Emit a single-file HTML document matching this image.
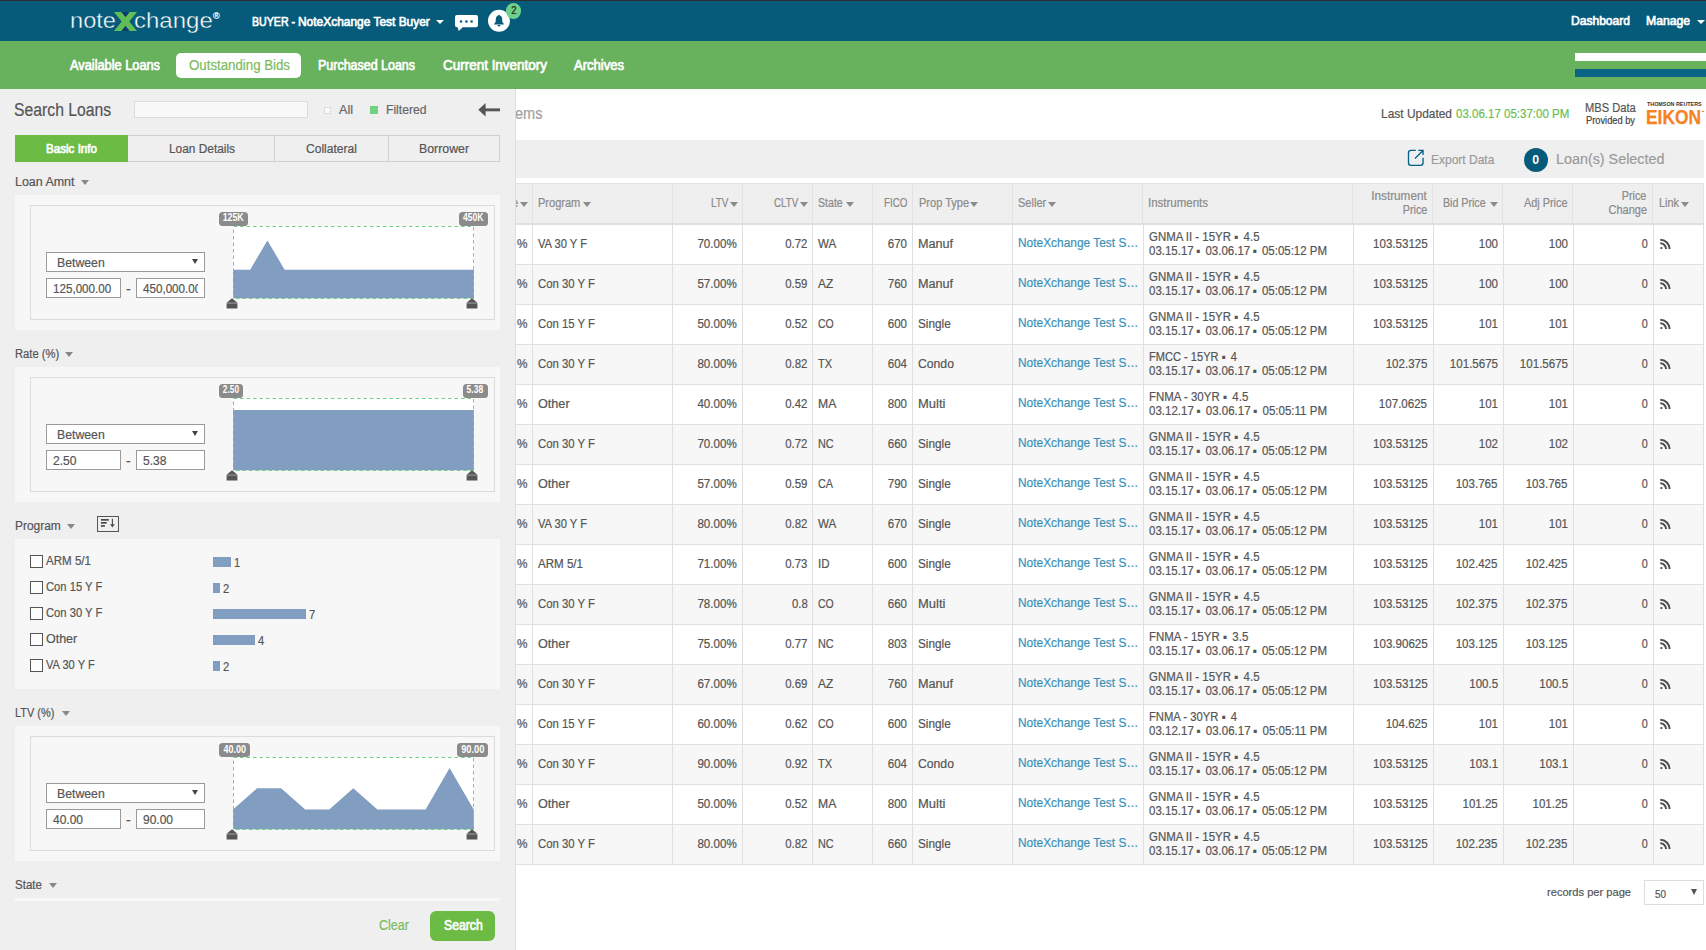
<!DOCTYPE html>
<html><head><meta charset="utf-8"><title>noteXchange</title><style>
html,body{margin:0;padding:0;}
body{width:1706px;height:950px;overflow:hidden;background:#fff;position:relative;font-family:"Liberation Sans",sans-serif;}
.t{position:absolute;white-space:pre;line-height:1;display:block;-webkit-text-stroke:0.2px currentColor;}
.b{position:absolute;box-sizing:border-box;display:block;}
</style></head><body>
<div class="b " style="left:0px;top:0px;width:1706px;height:41px;background:#065a7a;"></div>
<div class="b " style="left:0px;top:0px;width:1706px;height:1px;background:#2a2e33;"></div>
<div class="b " style="left:0px;top:41px;width:1706px;height:48px;background:#68b15d;"></div>
<span class="t" style="top:10.08px;font-size:22px;color:#fff;left:69.80px;transform-origin:0 0;transform:scaleX(1.0744);-webkit-text-stroke:0.4px #065a7a;">note</span>
<span class="t" style="top:10.08px;font-size:22px;color:#fff;left:134.20px;transform-origin:0 0;transform:scaleX(1.0919);-webkit-text-stroke:0.4px #065a7a;">change</span>
<svg class="b" style="left:114.3px;top:12px" width="23" height="19" viewBox="0 0 23 19"><path d="M0 0 H7.5 L23 19 H15.5 Z" fill="#63bd57"/><path d="M15.5 0 H23 L7.5 19 H0 Z" fill="#63bd57"/><path d="M7.5 0 H15.5 L11.5 4.9 Z" fill="#0b3c6e"/><path d="M7.5 19 H15.5 L11.5 14.1 Z" fill="#0b3c6e"/></svg>
<span class="t" style="top:10.56px;font-size:9.5px;color:#fff;left:213.20px;transform-origin:0 0;transform:scaleX(0.9500);">®</span>
<span class="t" style="top:14.87px;font-size:13.5px;color:#fff;-webkit-text-stroke:0.7px currentColor;left:252.00px;transform-origin:0 0;transform:scaleX(0.7871);">BUYER -</span>
<span class="t" style="top:14.87px;font-size:13.5px;color:#fff;-webkit-text-stroke:0.7px currentColor;left:297.70px;transform-origin:0 0;transform:scaleX(0.8841);">NoteXchange Test Buyer</span>
<div class="b" style="left:436px;top:20px;width:0;height:0;border-left:4.25px solid transparent;border-right:4.25px solid transparent;border-top:4.2px solid #fff;"></div>
<svg class="b" style="left:454px;top:14px" width="26" height="18" viewBox="0 0 26 18"><path d="M3 1 H22 Q24 1 24 3 V11.3 Q24 13.3 22 13.3 H8.8 L4.7 16.9 L3.6 13.3 H3 Q1 13.3 1 11.3 V3 Q1 1 3 1 Z" fill="#fff"/><circle cx="7" cy="7.4" r="1.25" fill="#0a5a80"/><circle cx="12.4" cy="7.4" r="1.25" fill="#0a5a80"/><circle cx="17.6" cy="7.4" r="1.25" fill="#0a5a80"/></svg>
<svg class="b" style="left:487px;top:9px" width="24" height="24" viewBox="0 0 24 24"><circle cx="12" cy="11.8" r="11" fill="#fff"/><path d="M12 5.8 C12.6 5.8 12.9 6.2 13 6.7 C14.6 7.2 15.2 8.6 15.2 10.4 C15.2 12.6 15.6 13.8 16.8 14.7 V15.4 H7.2 V14.7 C8.4 13.8 8.8 12.6 8.8 10.4 C8.8 8.6 9.4 7.2 11 6.7 C11.1 6.2 11.4 5.8 12 5.8 Z M10.5 15.9 H13.5 A1.5 1.5 0 0 1 10.5 15.9 Z" fill="#065a7a"/></svg>
<div class="b " style="left:505.7px;top:3.2px;width:15.6px;height:15.6px;background:#6fd08c;border-radius:50%;"></div>
<span class="t" style="top:6.34px;font-size:10px;color:#1c2410;left:510.62px;transform-origin:50% 0;transform:scaleX(0.9500);">2</span>
<span class="t" style="top:14.07px;font-size:13.5px;color:#fff;-webkit-text-stroke:0.7px currentColor;left:1570.50px;transform-origin:0 0;transform:scaleX(0.8934);">Dashboard</span>
<span class="t" style="top:14.07px;font-size:13.5px;color:#fff;-webkit-text-stroke:0.7px currentColor;left:1646.00px;transform-origin:0 0;transform:scaleX(0.9020);">Manage</span>
<div class="b" style="left:1697px;top:19.5px;width:0;height:0;border-left:4.0px solid transparent;border-right:4.0px solid transparent;border-top:4px solid #fff;"></div>
<span class="t" style="top:58.15px;font-size:14px;color:#fff;-webkit-text-stroke:0.7px currentColor;left:70.00px;transform-origin:0 0;transform:scaleX(0.9129);">Available Loans</span>
<div class="b " style="left:176px;top:53px;width:125px;height:25px;background:#fff;border-radius:5px;"></div>
<span class="t" style="top:58.15px;font-size:14px;color:#7dbb5c;left:188.50px;transform-origin:0 0;transform:scaleX(0.9473);">Outstanding Bids</span>
<span class="t" style="top:58.15px;font-size:14px;color:#fff;-webkit-text-stroke:0.7px currentColor;left:318.00px;transform-origin:0 0;transform:scaleX(0.8903);">Purchased Loans</span>
<span class="t" style="top:58.15px;font-size:14px;color:#fff;-webkit-text-stroke:0.7px currentColor;left:443.00px;transform-origin:0 0;transform:scaleX(0.9616);">Current Inventory</span>
<span class="t" style="top:58.15px;font-size:14px;color:#fff;-webkit-text-stroke:0.7px currentColor;left:574.00px;transform-origin:0 0;transform:scaleX(0.9314);">Archives</span>
<div class="b " style="left:1575px;top:53px;width:131px;height:8px;background:#fff;"></div>
<div class="b " style="left:1575px;top:69px;width:131px;height:8px;background:#0a6486;"></div>
<span class="t" style="top:106.36px;font-size:16px;color:#a0a0a0;left:514.60px;transform-origin:0 0;transform:scaleX(0.9065);">ems</span>
<span class="t" style="top:107.20px;font-size:13px;color:#555;left:1381.20px;transform-origin:0 0;transform:scaleX(0.9182);">Last Updated</span>
<span class="t" style="top:107.20px;font-size:13px;color:#6cbd4f;left:1455.70px;transform-origin:0 0;transform:scaleX(0.8857);">03.06.17 05:37:00 PM</span>
<span class="t" style="top:102.12px;font-size:12.5px;color:#555;left:1584.90px;transform-origin:0 0;transform:scaleX(0.8918);">MBS Data</span>
<span class="t" style="top:116.44px;font-size:10px;color:#444;left:1585.60px;transform-origin:0 0;transform:scaleX(0.9279);">Provided by</span>
<span class="t" style="top:101.56px;font-size:5.6px;color:#333;font-weight:bold;-webkit-text-stroke:0;left:1646.60px;transform-origin:0 0;transform:scaleX(0.9607);">THOMSON REUTERS</span>
<span class="t" style="top:107.64px;font-size:19.8px;color:#f6821f;font-weight:bold;-webkit-text-stroke:0;left:1646.00px;transform-origin:0 0;transform:scaleX(0.8771);-webkit-text-stroke:0.25px #f6821f;">EIKON</span>
<div class="b " style="left:1702.3px;top:111.2px;width:2px;height:1px;background:#f6821f;"></div>
<div class="b " style="left:516px;top:140px;width:1187.5px;height:38px;background:#efefef;"></div>
<svg class="b" style="left:1406px;top:148px" width="20" height="20" viewBox="0 0 20 20"><path d="M9.8 2.4 H5 Q2.5 2.4 2.5 4.9 V14.8 Q2.5 17.3 5 17.3 H14.5 Q17.05 17.3 17.05 14.8 V9.8" fill="none" stroke="#06628a" stroke-width="1.35"/><path d="M12.3 2.4 H17.05 V6.9 M16.8 2.65 L8.9 10.5" fill="none" stroke="#06628a" stroke-width="1.35"/></svg>
<span class="t" style="top:152.80px;font-size:13px;color:#9a9a9a;left:1431.10px;transform-origin:0 0;transform:scaleX(0.9222);">Export Data</span>
<div class="b " style="left:1524px;top:147.7px;width:24px;height:24px;background:#065a7a;border-radius:50%;"></div>
<span class="t" style="top:153.30px;font-size:13px;color:#fff;font-weight:bold;-webkit-text-stroke:0;left:1532.39px;transform-origin:50% 0;transform:scaleX(0.9500);">0</span>
<span class="t" style="top:150.68px;font-size:15.5px;color:#9a9a9a;left:1555.50px;transform-origin:0 0;transform:scaleX(0.9251);">Loan(s) Selected</span>
<div class="b " style="left:516px;top:183px;width:1188px;height:42px;background:#efefef;border-top:1px solid #e2e2e2;border-bottom:2px solid #e0e0e0;"></div>
<div class="b " style="left:516px;top:225px;width:1188px;height:40px;background:#fff;border-bottom:1px solid #e0e0e0;"></div>
<div class="b " style="left:516px;top:265px;width:1188px;height:40px;background:#f7f7f7;border-bottom:1px solid #e0e0e0;"></div>
<div class="b " style="left:516px;top:305px;width:1188px;height:40px;background:#fff;border-bottom:1px solid #e0e0e0;"></div>
<div class="b " style="left:516px;top:345px;width:1188px;height:40px;background:#f7f7f7;border-bottom:1px solid #e0e0e0;"></div>
<div class="b " style="left:516px;top:385px;width:1188px;height:40px;background:#fff;border-bottom:1px solid #e0e0e0;"></div>
<div class="b " style="left:516px;top:425px;width:1188px;height:40px;background:#f7f7f7;border-bottom:1px solid #e0e0e0;"></div>
<div class="b " style="left:516px;top:465px;width:1188px;height:40px;background:#fff;border-bottom:1px solid #e0e0e0;"></div>
<div class="b " style="left:516px;top:505px;width:1188px;height:40px;background:#f7f7f7;border-bottom:1px solid #e0e0e0;"></div>
<div class="b " style="left:516px;top:545px;width:1188px;height:40px;background:#fff;border-bottom:1px solid #e0e0e0;"></div>
<div class="b " style="left:516px;top:585px;width:1188px;height:40px;background:#f7f7f7;border-bottom:1px solid #e0e0e0;"></div>
<div class="b " style="left:516px;top:625px;width:1188px;height:40px;background:#fff;border-bottom:1px solid #e0e0e0;"></div>
<div class="b " style="left:516px;top:665px;width:1188px;height:40px;background:#f7f7f7;border-bottom:1px solid #e0e0e0;"></div>
<div class="b " style="left:516px;top:705px;width:1188px;height:40px;background:#fff;border-bottom:1px solid #e0e0e0;"></div>
<div class="b " style="left:516px;top:745px;width:1188px;height:40px;background:#f7f7f7;border-bottom:1px solid #e0e0e0;"></div>
<div class="b " style="left:516px;top:785px;width:1188px;height:40px;background:#fff;border-bottom:1px solid #e0e0e0;"></div>
<div class="b " style="left:516px;top:825px;width:1188px;height:40px;background:#f7f7f7;border-bottom:1px solid #e0e0e0;"></div>
<div class="b " style="left:532px;top:183px;width:1px;height:40px;background:#e2e2e2;"></div>
<div class="b " style="left:532px;top:225px;width:1px;height:640px;background:#e0e0e0;"></div>
<div class="b " style="left:672px;top:183px;width:1px;height:40px;background:#e2e2e2;"></div>
<div class="b " style="left:672px;top:225px;width:1px;height:640px;background:#e0e0e0;"></div>
<div class="b " style="left:742px;top:183px;width:1px;height:40px;background:#e2e2e2;"></div>
<div class="b " style="left:742px;top:225px;width:1px;height:640px;background:#e0e0e0;"></div>
<div class="b " style="left:812px;top:183px;width:1px;height:40px;background:#e2e2e2;"></div>
<div class="b " style="left:812px;top:225px;width:1px;height:640px;background:#e0e0e0;"></div>
<div class="b " style="left:872px;top:183px;width:1px;height:40px;background:#e2e2e2;"></div>
<div class="b " style="left:872px;top:225px;width:1px;height:640px;background:#e0e0e0;"></div>
<div class="b " style="left:912px;top:183px;width:1px;height:40px;background:#e2e2e2;"></div>
<div class="b " style="left:912px;top:225px;width:1px;height:640px;background:#e0e0e0;"></div>
<div class="b " style="left:1012px;top:183px;width:1px;height:40px;background:#e2e2e2;"></div>
<div class="b " style="left:1012px;top:225px;width:1px;height:640px;background:#e0e0e0;"></div>
<div class="b " style="left:1142px;top:183px;width:1px;height:40px;background:#e2e2e2;"></div>
<div class="b " style="left:1143px;top:225px;width:1px;height:640px;background:#e0e0e0;"></div>
<div class="b " style="left:1352px;top:183px;width:1px;height:40px;background:#e2e2e2;"></div>
<div class="b " style="left:1353px;top:225px;width:1px;height:640px;background:#e0e0e0;"></div>
<div class="b " style="left:1432px;top:183px;width:1px;height:40px;background:#e2e2e2;"></div>
<div class="b " style="left:1433px;top:225px;width:1px;height:640px;background:#e0e0e0;"></div>
<div class="b " style="left:1502px;top:183px;width:1px;height:40px;background:#e2e2e2;"></div>
<div class="b " style="left:1503px;top:225px;width:1px;height:640px;background:#e0e0e0;"></div>
<div class="b " style="left:1572px;top:183px;width:1px;height:40px;background:#e2e2e2;"></div>
<div class="b " style="left:1573px;top:225px;width:1px;height:640px;background:#e0e0e0;"></div>
<div class="b " style="left:1652px;top:183px;width:1px;height:40px;background:#e2e2e2;"></div>
<div class="b " style="left:1653px;top:225px;width:1px;height:640px;background:#e0e0e0;"></div>
<div class="b " style="left:1703px;top:183px;width:1px;height:40px;background:#e2e2e2;"></div>
<div class="b " style="left:1703px;top:225px;width:1px;height:640px;background:#e0e0e0;"></div>
<span class="t" style="top:196.64px;font-size:12px;color:#8a8a8a;left:512.00px;transform-origin:0 0;transform:scaleX(0.9300);">e</span>
<div class="b" style="left:520.3px;top:201.6px;width:0;height:0;border-left:4.0px solid transparent;border-right:4.0px solid transparent;border-top:5px solid #8a8a8a;"></div>
<span class="t" style="top:196.64px;font-size:12px;color:#8a8a8a;left:538.00px;transform-origin:0 0;transform:scaleX(0.9194);">Program</span>
<div class="b" style="left:583.3px;top:201.6px;width:0;height:0;border-left:4.0px solid transparent;border-right:4.0px solid transparent;border-top:5px solid #8a8a8a;"></div>
<span class="t" style="top:196.64px;font-size:12px;color:#8a8a8a;left:710.50px;transform-origin:0 0;transform:scaleX(0.8287);">LTV</span>
<div class="b" style="left:730px;top:201.6px;width:0;height:0;border-left:4.0px solid transparent;border-right:4.0px solid transparent;border-top:5px solid #8a8a8a;"></div>
<span class="t" style="top:196.64px;font-size:12px;color:#8a8a8a;left:773.80px;transform-origin:0 0;transform:scaleX(0.8126);">CLTV</span>
<div class="b" style="left:800px;top:201.6px;width:0;height:0;border-left:4.0px solid transparent;border-right:4.0px solid transparent;border-top:5px solid #8a8a8a;"></div>
<span class="t" style="top:196.64px;font-size:12px;color:#8a8a8a;left:818.30px;transform-origin:0 0;transform:scaleX(0.8816);">State</span>
<div class="b" style="left:845.5px;top:201.6px;width:0;height:0;border-left:4.0px solid transparent;border-right:4.0px solid transparent;border-top:5px solid #8a8a8a;"></div>
<span class="t" style="top:196.64px;font-size:12px;color:#8a8a8a;left:883.50px;transform-origin:0 0;transform:scaleX(0.8199);">FICO</span>
<span class="t" style="top:196.64px;font-size:12px;color:#8a8a8a;left:918.60px;transform-origin:0 0;transform:scaleX(0.9178);">Prop Type</span>
<div class="b" style="left:970.3px;top:201.6px;width:0;height:0;border-left:4.0px solid transparent;border-right:4.0px solid transparent;border-top:5px solid #8a8a8a;"></div>
<span class="t" style="top:196.64px;font-size:12px;color:#8a8a8a;left:1017.80px;transform-origin:0 0;transform:scaleX(0.9192);">Seller</span>
<div class="b" style="left:1048px;top:201.6px;width:0;height:0;border-left:4.0px solid transparent;border-right:4.0px solid transparent;border-top:5px solid #8a8a8a;"></div>
<span class="t" style="top:196.64px;font-size:12px;color:#8a8a8a;left:1148.00px;transform-origin:0 0;transform:scaleX(0.9572);">Instruments</span>
<span class="t" style="top:190.04px;font-size:12px;color:#8a8a8a;left:1370.32px;transform-origin:100% 0;transform:scaleX(0.9773);">Instrument</span>
<span class="t" style="top:204.14px;font-size:12px;color:#8a8a8a;left:1399.66px;transform-origin:100% 0;transform:scaleX(0.8961);">Price</span>
<span class="t" style="top:196.64px;font-size:12px;color:#8a8a8a;left:1442.80px;transform-origin:0 0;transform:scaleX(0.8872);">Bid Price</span>
<div class="b" style="left:1490px;top:201.6px;width:0;height:0;border-left:4.0px solid transparent;border-right:4.0px solid transparent;border-top:5px solid #8a8a8a;"></div>
<span class="t" style="top:196.64px;font-size:12px;color:#8a8a8a;left:1523.50px;transform-origin:0 0;transform:scaleX(0.9059);">Adj Price</span>
<span class="t" style="top:190.04px;font-size:12px;color:#8a8a8a;left:1619.46px;transform-origin:100% 0;transform:scaleX(0.8961);">Price</span>
<span class="t" style="top:204.14px;font-size:12px;color:#8a8a8a;left:1604.77px;transform-origin:100% 0;transform:scaleX(0.9160);">Change</span>
<span class="t" style="top:196.64px;font-size:12px;color:#8a8a8a;left:1658.80px;transform-origin:0 0;transform:scaleX(0.9086);">Link</span>
<div class="b" style="left:1681px;top:201.6px;width:0;height:0;border-left:4.0px solid transparent;border-right:4.0px solid transparent;border-top:5px solid #8a8a8a;"></div>
<span class="t" style="top:237.84px;font-size:12px;color:#555;left:516.50px;transform-origin:0 0;transform:scaleX(0.9840);">%</span>
<span class="t" style="top:237.84px;font-size:12px;color:#555;left:538.00px;transform-origin:0 0;transform:scaleX(0.9297);">VA 30 Y F</span>
<span class="t" style="top:237.84px;font-size:12px;color:#555;left:696.30px;transform-origin:100% 0;transform:scaleX(0.9657);">70.00%</span>
<span class="t" style="top:237.84px;font-size:12px;color:#555;left:783.95px;transform-origin:100% 0;transform:scaleX(0.9506);">0.72</span>
<span class="t" style="top:237.84px;font-size:12px;color:#555;left:818.30px;transform-origin:0 0;transform:scaleX(0.9689);">WA</span>
<span class="t" style="top:237.84px;font-size:12px;color:#555;left:887.28px;transform-origin:100% 0;transform:scaleX(0.9591);">670</span>
<span class="t" style="top:237.84px;font-size:12px;color:#555;left:918.00px;transform-origin:0 0;transform:scaleX(1.0525);">Manuf</span>
<span class="t" style="top:236.84px;font-size:12px;color:#3a92ba;left:1017.80px;transform-origin:0 0;transform:scaleX(0.9928);">NoteXchange Test S…</span>
<span class="t" style="top:231.04px;font-size:12px;color:#555;left:1149.00px;transform-origin:0 0;transform:scaleX(0.9524);">GNMA II - 15YR ▪  4.5</span>
<span class="t" style="top:245.04px;font-size:12px;color:#555;left:1149.00px;transform-origin:0 0;transform:scaleX(0.9558);">03.15.17 ▪  03.06.17 ▪  05:05:12 PM</span>
<span class="t" style="top:237.84px;font-size:12px;color:#555;left:1370.78px;transform-origin:100% 0;transform:scaleX(0.9644);">103.53125</span>
<span class="t" style="top:237.84px;font-size:12px;color:#555;left:1477.78px;transform-origin:100% 0;transform:scaleX(0.9591);">100</span>
<span class="t" style="top:237.84px;font-size:12px;color:#555;left:1547.78px;transform-origin:100% 0;transform:scaleX(0.9591);">100</span>
<span class="t" style="top:237.84px;font-size:12px;color:#555;left:1640.93px;transform-origin:100% 0;transform:scaleX(0.8991);">0</span>
<svg class="b" style="left:1660px;top:238px" width="12" height="12" viewBox="0 0 12 12"><circle cx="1.35" cy="10.05" r="1.15" fill="#4d4d4d"/><path d="M0.3 5.3 A5.8 5.8 0 0 1 6.1 11.1" fill="none" stroke="#4d4d4d" stroke-width="2"/><path d="M0.3 1.8 A9.3 9.3 0 0 1 9.6 11.1" fill="none" stroke="#4d4d4d" stroke-width="2"/></svg>
<span class="t" style="top:277.84px;font-size:12px;color:#555;left:516.50px;transform-origin:0 0;transform:scaleX(0.9840);">%</span>
<span class="t" style="top:277.84px;font-size:12px;color:#555;left:538.00px;transform-origin:0 0;transform:scaleX(0.9459);">Con 30 Y F</span>
<span class="t" style="top:277.84px;font-size:12px;color:#555;left:696.30px;transform-origin:100% 0;transform:scaleX(0.9657);">57.00%</span>
<span class="t" style="top:277.84px;font-size:12px;color:#555;left:783.95px;transform-origin:100% 0;transform:scaleX(0.9506);">0.59</span>
<span class="t" style="top:277.84px;font-size:12px;color:#555;left:818.30px;transform-origin:0 0;transform:scaleX(0.9913);">AZ</span>
<span class="t" style="top:277.84px;font-size:12px;color:#555;left:887.28px;transform-origin:100% 0;transform:scaleX(0.9591);">760</span>
<span class="t" style="top:277.84px;font-size:12px;color:#555;left:918.00px;transform-origin:0 0;transform:scaleX(1.0525);">Manuf</span>
<span class="t" style="top:276.84px;font-size:12px;color:#3a92ba;left:1017.80px;transform-origin:0 0;transform:scaleX(0.9928);">NoteXchange Test S…</span>
<span class="t" style="top:271.04px;font-size:12px;color:#555;left:1149.00px;transform-origin:0 0;transform:scaleX(0.9524);">GNMA II - 15YR ▪  4.5</span>
<span class="t" style="top:285.04px;font-size:12px;color:#555;left:1149.00px;transform-origin:0 0;transform:scaleX(0.9558);">03.15.17 ▪  03.06.17 ▪  05:05:12 PM</span>
<span class="t" style="top:277.84px;font-size:12px;color:#555;left:1370.78px;transform-origin:100% 0;transform:scaleX(0.9644);">103.53125</span>
<span class="t" style="top:277.84px;font-size:12px;color:#555;left:1477.78px;transform-origin:100% 0;transform:scaleX(0.9591);">100</span>
<span class="t" style="top:277.84px;font-size:12px;color:#555;left:1547.78px;transform-origin:100% 0;transform:scaleX(0.9591);">100</span>
<span class="t" style="top:277.84px;font-size:12px;color:#555;left:1640.93px;transform-origin:100% 0;transform:scaleX(0.8991);">0</span>
<svg class="b" style="left:1660px;top:278px" width="12" height="12" viewBox="0 0 12 12"><circle cx="1.35" cy="10.05" r="1.15" fill="#4d4d4d"/><path d="M0.3 5.3 A5.8 5.8 0 0 1 6.1 11.1" fill="none" stroke="#4d4d4d" stroke-width="2"/><path d="M0.3 1.8 A9.3 9.3 0 0 1 9.6 11.1" fill="none" stroke="#4d4d4d" stroke-width="2"/></svg>
<span class="t" style="top:317.84px;font-size:12px;color:#555;left:516.50px;transform-origin:0 0;transform:scaleX(0.9840);">%</span>
<span class="t" style="top:317.84px;font-size:12px;color:#555;left:538.00px;transform-origin:0 0;transform:scaleX(0.9459);">Con 15 Y F</span>
<span class="t" style="top:317.84px;font-size:12px;color:#555;left:696.30px;transform-origin:100% 0;transform:scaleX(0.9657);">50.00%</span>
<span class="t" style="top:317.84px;font-size:12px;color:#555;left:783.95px;transform-origin:100% 0;transform:scaleX(0.9506);">0.52</span>
<span class="t" style="top:317.84px;font-size:12px;color:#555;left:818.30px;transform-origin:0 0;transform:scaleX(0.8722);">CO</span>
<span class="t" style="top:317.84px;font-size:12px;color:#555;left:887.28px;transform-origin:100% 0;transform:scaleX(0.9591);">600</span>
<span class="t" style="top:317.84px;font-size:12px;color:#555;left:918.00px;transform-origin:0 0;transform:scaleX(0.9803);">Single</span>
<span class="t" style="top:316.84px;font-size:12px;color:#3a92ba;left:1017.80px;transform-origin:0 0;transform:scaleX(0.9928);">NoteXchange Test S…</span>
<span class="t" style="top:311.04px;font-size:12px;color:#555;left:1149.00px;transform-origin:0 0;transform:scaleX(0.9524);">GNMA II - 15YR ▪  4.5</span>
<span class="t" style="top:325.04px;font-size:12px;color:#555;left:1149.00px;transform-origin:0 0;transform:scaleX(0.9558);">03.15.17 ▪  03.06.17 ▪  05:05:12 PM</span>
<span class="t" style="top:317.84px;font-size:12px;color:#555;left:1370.78px;transform-origin:100% 0;transform:scaleX(0.9644);">103.53125</span>
<span class="t" style="top:317.84px;font-size:12px;color:#555;left:1477.78px;transform-origin:100% 0;transform:scaleX(0.9591);">101</span>
<span class="t" style="top:317.84px;font-size:12px;color:#555;left:1547.78px;transform-origin:100% 0;transform:scaleX(0.9591);">101</span>
<span class="t" style="top:317.84px;font-size:12px;color:#555;left:1640.93px;transform-origin:100% 0;transform:scaleX(0.8991);">0</span>
<svg class="b" style="left:1660px;top:318px" width="12" height="12" viewBox="0 0 12 12"><circle cx="1.35" cy="10.05" r="1.15" fill="#4d4d4d"/><path d="M0.3 5.3 A5.8 5.8 0 0 1 6.1 11.1" fill="none" stroke="#4d4d4d" stroke-width="2"/><path d="M0.3 1.8 A9.3 9.3 0 0 1 9.6 11.1" fill="none" stroke="#4d4d4d" stroke-width="2"/></svg>
<span class="t" style="top:357.84px;font-size:12px;color:#555;left:516.50px;transform-origin:0 0;transform:scaleX(0.9840);">%</span>
<span class="t" style="top:357.84px;font-size:12px;color:#555;left:538.00px;transform-origin:0 0;transform:scaleX(0.9459);">Con 30 Y F</span>
<span class="t" style="top:357.84px;font-size:12px;color:#555;left:696.30px;transform-origin:100% 0;transform:scaleX(0.9657);">80.00%</span>
<span class="t" style="top:357.84px;font-size:12px;color:#555;left:783.95px;transform-origin:100% 0;transform:scaleX(0.9506);">0.82</span>
<span class="t" style="top:357.84px;font-size:12px;color:#555;left:818.30px;transform-origin:0 0;transform:scaleX(0.9195);">TX</span>
<span class="t" style="top:357.84px;font-size:12px;color:#555;left:887.28px;transform-origin:100% 0;transform:scaleX(0.9591);">604</span>
<span class="t" style="top:357.84px;font-size:12px;color:#555;left:918.00px;transform-origin:0 0;transform:scaleX(1.0153);">Condo</span>
<span class="t" style="top:356.84px;font-size:12px;color:#3a92ba;left:1017.80px;transform-origin:0 0;transform:scaleX(0.9928);">NoteXchange Test S…</span>
<span class="t" style="top:351.04px;font-size:12px;color:#555;left:1149.00px;transform-origin:0 0;transform:scaleX(0.9231);">FMCC - 15YR ▪  4</span>
<span class="t" style="top:365.04px;font-size:12px;color:#555;left:1149.00px;transform-origin:0 0;transform:scaleX(0.9558);">03.15.17 ▪  03.06.17 ▪  05:05:12 PM</span>
<span class="t" style="top:357.84px;font-size:12px;color:#555;left:1384.13px;transform-origin:100% 0;transform:scaleX(0.9614);">102.375</span>
<span class="t" style="top:357.84px;font-size:12px;color:#555;left:1447.75px;transform-origin:100% 0;transform:scaleX(0.9631);">101.5675</span>
<span class="t" style="top:357.84px;font-size:12px;color:#555;left:1517.75px;transform-origin:100% 0;transform:scaleX(0.9631);">101.5675</span>
<span class="t" style="top:357.84px;font-size:12px;color:#555;left:1640.93px;transform-origin:100% 0;transform:scaleX(0.8991);">0</span>
<svg class="b" style="left:1660px;top:358px" width="12" height="12" viewBox="0 0 12 12"><circle cx="1.35" cy="10.05" r="1.15" fill="#4d4d4d"/><path d="M0.3 5.3 A5.8 5.8 0 0 1 6.1 11.1" fill="none" stroke="#4d4d4d" stroke-width="2"/><path d="M0.3 1.8 A9.3 9.3 0 0 1 9.6 11.1" fill="none" stroke="#4d4d4d" stroke-width="2"/></svg>
<span class="t" style="top:397.84px;font-size:12px;color:#555;left:516.50px;transform-origin:0 0;transform:scaleX(0.9840);">%</span>
<span class="t" style="top:397.84px;font-size:12px;color:#555;left:538.00px;transform-origin:0 0;transform:scaleX(1.0530);">Other</span>
<span class="t" style="top:397.84px;font-size:12px;color:#555;left:696.30px;transform-origin:100% 0;transform:scaleX(0.9657);">40.00%</span>
<span class="t" style="top:397.84px;font-size:12px;color:#555;left:783.95px;transform-origin:100% 0;transform:scaleX(0.9506);">0.42</span>
<span class="t" style="top:397.84px;font-size:12px;color:#555;left:818.30px;transform-origin:0 0;transform:scaleX(1.0167);">MA</span>
<span class="t" style="top:397.84px;font-size:12px;color:#555;left:887.28px;transform-origin:100% 0;transform:scaleX(0.9591);">800</span>
<span class="t" style="top:397.84px;font-size:12px;color:#555;left:918.00px;transform-origin:0 0;transform:scaleX(1.0815);">Multi</span>
<span class="t" style="top:396.84px;font-size:12px;color:#3a92ba;left:1017.80px;transform-origin:0 0;transform:scaleX(0.9928);">NoteXchange Test S…</span>
<span class="t" style="top:391.04px;font-size:12px;color:#555;left:1149.00px;transform-origin:0 0;transform:scaleX(0.9546);">FNMA - 30YR ▪  4.5</span>
<span class="t" style="top:405.04px;font-size:12px;color:#555;left:1149.00px;transform-origin:0 0;transform:scaleX(0.9604);">03.12.17 ▪  03.06.17 ▪  05:05:11 PM</span>
<span class="t" style="top:397.84px;font-size:12px;color:#555;left:1377.45px;transform-origin:100% 0;transform:scaleX(0.9631);">107.0625</span>
<span class="t" style="top:397.84px;font-size:12px;color:#555;left:1477.78px;transform-origin:100% 0;transform:scaleX(0.9591);">101</span>
<span class="t" style="top:397.84px;font-size:12px;color:#555;left:1547.78px;transform-origin:100% 0;transform:scaleX(0.9591);">101</span>
<span class="t" style="top:397.84px;font-size:12px;color:#555;left:1640.93px;transform-origin:100% 0;transform:scaleX(0.8991);">0</span>
<svg class="b" style="left:1660px;top:398px" width="12" height="12" viewBox="0 0 12 12"><circle cx="1.35" cy="10.05" r="1.15" fill="#4d4d4d"/><path d="M0.3 5.3 A5.8 5.8 0 0 1 6.1 11.1" fill="none" stroke="#4d4d4d" stroke-width="2"/><path d="M0.3 1.8 A9.3 9.3 0 0 1 9.6 11.1" fill="none" stroke="#4d4d4d" stroke-width="2"/></svg>
<span class="t" style="top:437.84px;font-size:12px;color:#555;left:516.50px;transform-origin:0 0;transform:scaleX(0.9840);">%</span>
<span class="t" style="top:437.84px;font-size:12px;color:#555;left:538.00px;transform-origin:0 0;transform:scaleX(0.9459);">Con 30 Y F</span>
<span class="t" style="top:437.84px;font-size:12px;color:#555;left:696.30px;transform-origin:100% 0;transform:scaleX(0.9657);">70.00%</span>
<span class="t" style="top:437.84px;font-size:12px;color:#555;left:783.95px;transform-origin:100% 0;transform:scaleX(0.9506);">0.72</span>
<span class="t" style="top:437.84px;font-size:12px;color:#555;left:818.30px;transform-origin:0 0;transform:scaleX(0.9058);">NC</span>
<span class="t" style="top:437.84px;font-size:12px;color:#555;left:887.28px;transform-origin:100% 0;transform:scaleX(0.9591);">660</span>
<span class="t" style="top:437.84px;font-size:12px;color:#555;left:918.00px;transform-origin:0 0;transform:scaleX(0.9803);">Single</span>
<span class="t" style="top:436.84px;font-size:12px;color:#3a92ba;left:1017.80px;transform-origin:0 0;transform:scaleX(0.9928);">NoteXchange Test S…</span>
<span class="t" style="top:431.04px;font-size:12px;color:#555;left:1149.00px;transform-origin:0 0;transform:scaleX(0.9524);">GNMA II - 15YR ▪  4.5</span>
<span class="t" style="top:445.04px;font-size:12px;color:#555;left:1149.00px;transform-origin:0 0;transform:scaleX(0.9558);">03.15.17 ▪  03.06.17 ▪  05:05:12 PM</span>
<span class="t" style="top:437.84px;font-size:12px;color:#555;left:1370.78px;transform-origin:100% 0;transform:scaleX(0.9644);">103.53125</span>
<span class="t" style="top:437.84px;font-size:12px;color:#555;left:1477.78px;transform-origin:100% 0;transform:scaleX(0.9591);">102</span>
<span class="t" style="top:437.84px;font-size:12px;color:#555;left:1547.78px;transform-origin:100% 0;transform:scaleX(0.9591);">102</span>
<span class="t" style="top:437.84px;font-size:12px;color:#555;left:1640.93px;transform-origin:100% 0;transform:scaleX(0.8991);">0</span>
<svg class="b" style="left:1660px;top:438px" width="12" height="12" viewBox="0 0 12 12"><circle cx="1.35" cy="10.05" r="1.15" fill="#4d4d4d"/><path d="M0.3 5.3 A5.8 5.8 0 0 1 6.1 11.1" fill="none" stroke="#4d4d4d" stroke-width="2"/><path d="M0.3 1.8 A9.3 9.3 0 0 1 9.6 11.1" fill="none" stroke="#4d4d4d" stroke-width="2"/></svg>
<span class="t" style="top:477.84px;font-size:12px;color:#555;left:516.50px;transform-origin:0 0;transform:scaleX(0.9840);">%</span>
<span class="t" style="top:477.84px;font-size:12px;color:#555;left:538.00px;transform-origin:0 0;transform:scaleX(1.0530);">Other</span>
<span class="t" style="top:477.84px;font-size:12px;color:#555;left:696.30px;transform-origin:100% 0;transform:scaleX(0.9657);">57.00%</span>
<span class="t" style="top:477.84px;font-size:12px;color:#555;left:783.95px;transform-origin:100% 0;transform:scaleX(0.9506);">0.59</span>
<span class="t" style="top:477.84px;font-size:12px;color:#555;left:818.30px;transform-origin:0 0;transform:scaleX(0.8998);">CA</span>
<span class="t" style="top:477.84px;font-size:12px;color:#555;left:887.28px;transform-origin:100% 0;transform:scaleX(0.9591);">790</span>
<span class="t" style="top:477.84px;font-size:12px;color:#555;left:918.00px;transform-origin:0 0;transform:scaleX(0.9803);">Single</span>
<span class="t" style="top:476.84px;font-size:12px;color:#3a92ba;left:1017.80px;transform-origin:0 0;transform:scaleX(0.9928);">NoteXchange Test S…</span>
<span class="t" style="top:471.04px;font-size:12px;color:#555;left:1149.00px;transform-origin:0 0;transform:scaleX(0.9524);">GNMA II - 15YR ▪  4.5</span>
<span class="t" style="top:485.04px;font-size:12px;color:#555;left:1149.00px;transform-origin:0 0;transform:scaleX(0.9558);">03.15.17 ▪  03.06.17 ▪  05:05:12 PM</span>
<span class="t" style="top:477.84px;font-size:12px;color:#555;left:1370.78px;transform-origin:100% 0;transform:scaleX(0.9644);">103.53125</span>
<span class="t" style="top:477.84px;font-size:12px;color:#555;left:1454.43px;transform-origin:100% 0;transform:scaleX(0.9614);">103.765</span>
<span class="t" style="top:477.84px;font-size:12px;color:#555;left:1524.43px;transform-origin:100% 0;transform:scaleX(0.9614);">103.765</span>
<span class="t" style="top:477.84px;font-size:12px;color:#555;left:1640.93px;transform-origin:100% 0;transform:scaleX(0.8991);">0</span>
<svg class="b" style="left:1660px;top:478px" width="12" height="12" viewBox="0 0 12 12"><circle cx="1.35" cy="10.05" r="1.15" fill="#4d4d4d"/><path d="M0.3 5.3 A5.8 5.8 0 0 1 6.1 11.1" fill="none" stroke="#4d4d4d" stroke-width="2"/><path d="M0.3 1.8 A9.3 9.3 0 0 1 9.6 11.1" fill="none" stroke="#4d4d4d" stroke-width="2"/></svg>
<span class="t" style="top:517.84px;font-size:12px;color:#555;left:516.50px;transform-origin:0 0;transform:scaleX(0.9840);">%</span>
<span class="t" style="top:517.84px;font-size:12px;color:#555;left:538.00px;transform-origin:0 0;transform:scaleX(0.9297);">VA 30 Y F</span>
<span class="t" style="top:517.84px;font-size:12px;color:#555;left:696.30px;transform-origin:100% 0;transform:scaleX(0.9657);">80.00%</span>
<span class="t" style="top:517.84px;font-size:12px;color:#555;left:783.95px;transform-origin:100% 0;transform:scaleX(0.9506);">0.82</span>
<span class="t" style="top:517.84px;font-size:12px;color:#555;left:818.30px;transform-origin:0 0;transform:scaleX(0.9689);">WA</span>
<span class="t" style="top:517.84px;font-size:12px;color:#555;left:887.28px;transform-origin:100% 0;transform:scaleX(0.9591);">670</span>
<span class="t" style="top:517.84px;font-size:12px;color:#555;left:918.00px;transform-origin:0 0;transform:scaleX(0.9803);">Single</span>
<span class="t" style="top:516.84px;font-size:12px;color:#3a92ba;left:1017.80px;transform-origin:0 0;transform:scaleX(0.9928);">NoteXchange Test S…</span>
<span class="t" style="top:511.04px;font-size:12px;color:#555;left:1149.00px;transform-origin:0 0;transform:scaleX(0.9524);">GNMA II - 15YR ▪  4.5</span>
<span class="t" style="top:525.04px;font-size:12px;color:#555;left:1149.00px;transform-origin:0 0;transform:scaleX(0.9558);">03.15.17 ▪  03.06.17 ▪  05:05:12 PM</span>
<span class="t" style="top:517.84px;font-size:12px;color:#555;left:1370.78px;transform-origin:100% 0;transform:scaleX(0.9644);">103.53125</span>
<span class="t" style="top:517.84px;font-size:12px;color:#555;left:1477.78px;transform-origin:100% 0;transform:scaleX(0.9591);">101</span>
<span class="t" style="top:517.84px;font-size:12px;color:#555;left:1547.78px;transform-origin:100% 0;transform:scaleX(0.9591);">101</span>
<span class="t" style="top:517.84px;font-size:12px;color:#555;left:1640.93px;transform-origin:100% 0;transform:scaleX(0.8991);">0</span>
<svg class="b" style="left:1660px;top:518px" width="12" height="12" viewBox="0 0 12 12"><circle cx="1.35" cy="10.05" r="1.15" fill="#4d4d4d"/><path d="M0.3 5.3 A5.8 5.8 0 0 1 6.1 11.1" fill="none" stroke="#4d4d4d" stroke-width="2"/><path d="M0.3 1.8 A9.3 9.3 0 0 1 9.6 11.1" fill="none" stroke="#4d4d4d" stroke-width="2"/></svg>
<span class="t" style="top:557.84px;font-size:12px;color:#555;left:516.50px;transform-origin:0 0;transform:scaleX(0.9840);">%</span>
<span class="t" style="top:557.84px;font-size:12px;color:#555;left:538.00px;transform-origin:0 0;transform:scaleX(0.9640);">ARM 5/1</span>
<span class="t" style="top:557.84px;font-size:12px;color:#555;left:696.30px;transform-origin:100% 0;transform:scaleX(0.9657);">71.00%</span>
<span class="t" style="top:557.84px;font-size:12px;color:#555;left:783.95px;transform-origin:100% 0;transform:scaleX(0.9506);">0.73</span>
<span class="t" style="top:557.84px;font-size:12px;color:#555;left:818.30px;transform-origin:0 0;transform:scaleX(0.9583);">ID</span>
<span class="t" style="top:557.84px;font-size:12px;color:#555;left:887.28px;transform-origin:100% 0;transform:scaleX(0.9591);">600</span>
<span class="t" style="top:557.84px;font-size:12px;color:#555;left:918.00px;transform-origin:0 0;transform:scaleX(0.9803);">Single</span>
<span class="t" style="top:556.84px;font-size:12px;color:#3a92ba;left:1017.80px;transform-origin:0 0;transform:scaleX(0.9928);">NoteXchange Test S…</span>
<span class="t" style="top:551.04px;font-size:12px;color:#555;left:1149.00px;transform-origin:0 0;transform:scaleX(0.9524);">GNMA II - 15YR ▪  4.5</span>
<span class="t" style="top:565.04px;font-size:12px;color:#555;left:1149.00px;transform-origin:0 0;transform:scaleX(0.9558);">03.15.17 ▪  03.06.17 ▪  05:05:12 PM</span>
<span class="t" style="top:557.84px;font-size:12px;color:#555;left:1370.78px;transform-origin:100% 0;transform:scaleX(0.9644);">103.53125</span>
<span class="t" style="top:557.84px;font-size:12px;color:#555;left:1454.43px;transform-origin:100% 0;transform:scaleX(0.9614);">102.425</span>
<span class="t" style="top:557.84px;font-size:12px;color:#555;left:1524.43px;transform-origin:100% 0;transform:scaleX(0.9614);">102.425</span>
<span class="t" style="top:557.84px;font-size:12px;color:#555;left:1640.93px;transform-origin:100% 0;transform:scaleX(0.8991);">0</span>
<svg class="b" style="left:1660px;top:558px" width="12" height="12" viewBox="0 0 12 12"><circle cx="1.35" cy="10.05" r="1.15" fill="#4d4d4d"/><path d="M0.3 5.3 A5.8 5.8 0 0 1 6.1 11.1" fill="none" stroke="#4d4d4d" stroke-width="2"/><path d="M0.3 1.8 A9.3 9.3 0 0 1 9.6 11.1" fill="none" stroke="#4d4d4d" stroke-width="2"/></svg>
<span class="t" style="top:597.84px;font-size:12px;color:#555;left:516.50px;transform-origin:0 0;transform:scaleX(0.9840);">%</span>
<span class="t" style="top:597.84px;font-size:12px;color:#555;left:538.00px;transform-origin:0 0;transform:scaleX(0.9459);">Con 30 Y F</span>
<span class="t" style="top:597.84px;font-size:12px;color:#555;left:696.30px;transform-origin:100% 0;transform:scaleX(0.9657);">78.00%</span>
<span class="t" style="top:597.84px;font-size:12px;color:#555;left:790.62px;transform-origin:100% 0;transform:scaleX(0.9412);">0.8</span>
<span class="t" style="top:597.84px;font-size:12px;color:#555;left:818.30px;transform-origin:0 0;transform:scaleX(0.8722);">CO</span>
<span class="t" style="top:597.84px;font-size:12px;color:#555;left:887.28px;transform-origin:100% 0;transform:scaleX(0.9591);">660</span>
<span class="t" style="top:597.84px;font-size:12px;color:#555;left:918.00px;transform-origin:0 0;transform:scaleX(1.0815);">Multi</span>
<span class="t" style="top:596.84px;font-size:12px;color:#3a92ba;left:1017.80px;transform-origin:0 0;transform:scaleX(0.9928);">NoteXchange Test S…</span>
<span class="t" style="top:591.04px;font-size:12px;color:#555;left:1149.00px;transform-origin:0 0;transform:scaleX(0.9524);">GNMA II - 15YR ▪  4.5</span>
<span class="t" style="top:605.04px;font-size:12px;color:#555;left:1149.00px;transform-origin:0 0;transform:scaleX(0.9558);">03.15.17 ▪  03.06.17 ▪  05:05:12 PM</span>
<span class="t" style="top:597.84px;font-size:12px;color:#555;left:1370.78px;transform-origin:100% 0;transform:scaleX(0.9644);">103.53125</span>
<span class="t" style="top:597.84px;font-size:12px;color:#555;left:1454.43px;transform-origin:100% 0;transform:scaleX(0.9614);">102.375</span>
<span class="t" style="top:597.84px;font-size:12px;color:#555;left:1524.43px;transform-origin:100% 0;transform:scaleX(0.9614);">102.375</span>
<span class="t" style="top:597.84px;font-size:12px;color:#555;left:1640.93px;transform-origin:100% 0;transform:scaleX(0.8991);">0</span>
<svg class="b" style="left:1660px;top:598px" width="12" height="12" viewBox="0 0 12 12"><circle cx="1.35" cy="10.05" r="1.15" fill="#4d4d4d"/><path d="M0.3 5.3 A5.8 5.8 0 0 1 6.1 11.1" fill="none" stroke="#4d4d4d" stroke-width="2"/><path d="M0.3 1.8 A9.3 9.3 0 0 1 9.6 11.1" fill="none" stroke="#4d4d4d" stroke-width="2"/></svg>
<span class="t" style="top:637.84px;font-size:12px;color:#555;left:516.50px;transform-origin:0 0;transform:scaleX(0.9840);">%</span>
<span class="t" style="top:637.84px;font-size:12px;color:#555;left:538.00px;transform-origin:0 0;transform:scaleX(1.0530);">Other</span>
<span class="t" style="top:637.84px;font-size:12px;color:#555;left:696.30px;transform-origin:100% 0;transform:scaleX(0.9657);">75.00%</span>
<span class="t" style="top:637.84px;font-size:12px;color:#555;left:783.95px;transform-origin:100% 0;transform:scaleX(0.9506);">0.77</span>
<span class="t" style="top:637.84px;font-size:12px;color:#555;left:818.30px;transform-origin:0 0;transform:scaleX(0.9058);">NC</span>
<span class="t" style="top:637.84px;font-size:12px;color:#555;left:887.28px;transform-origin:100% 0;transform:scaleX(0.9591);">803</span>
<span class="t" style="top:637.84px;font-size:12px;color:#555;left:918.00px;transform-origin:0 0;transform:scaleX(0.9803);">Single</span>
<span class="t" style="top:636.84px;font-size:12px;color:#3a92ba;left:1017.80px;transform-origin:0 0;transform:scaleX(0.9928);">NoteXchange Test S…</span>
<span class="t" style="top:631.04px;font-size:12px;color:#555;left:1149.00px;transform-origin:0 0;transform:scaleX(0.9546);">FNMA - 15YR ▪  3.5</span>
<span class="t" style="top:645.04px;font-size:12px;color:#555;left:1149.00px;transform-origin:0 0;transform:scaleX(0.9558);">03.15.17 ▪  03.06.17 ▪  05:05:12 PM</span>
<span class="t" style="top:637.84px;font-size:12px;color:#555;left:1370.78px;transform-origin:100% 0;transform:scaleX(0.9644);">103.90625</span>
<span class="t" style="top:637.84px;font-size:12px;color:#555;left:1454.43px;transform-origin:100% 0;transform:scaleX(0.9614);">103.125</span>
<span class="t" style="top:637.84px;font-size:12px;color:#555;left:1524.43px;transform-origin:100% 0;transform:scaleX(0.9614);">103.125</span>
<span class="t" style="top:637.84px;font-size:12px;color:#555;left:1640.93px;transform-origin:100% 0;transform:scaleX(0.8991);">0</span>
<svg class="b" style="left:1660px;top:638px" width="12" height="12" viewBox="0 0 12 12"><circle cx="1.35" cy="10.05" r="1.15" fill="#4d4d4d"/><path d="M0.3 5.3 A5.8 5.8 0 0 1 6.1 11.1" fill="none" stroke="#4d4d4d" stroke-width="2"/><path d="M0.3 1.8 A9.3 9.3 0 0 1 9.6 11.1" fill="none" stroke="#4d4d4d" stroke-width="2"/></svg>
<span class="t" style="top:677.84px;font-size:12px;color:#555;left:516.50px;transform-origin:0 0;transform:scaleX(0.9840);">%</span>
<span class="t" style="top:677.84px;font-size:12px;color:#555;left:538.00px;transform-origin:0 0;transform:scaleX(0.9459);">Con 30 Y F</span>
<span class="t" style="top:677.84px;font-size:12px;color:#555;left:696.30px;transform-origin:100% 0;transform:scaleX(0.9657);">67.00%</span>
<span class="t" style="top:677.84px;font-size:12px;color:#555;left:783.95px;transform-origin:100% 0;transform:scaleX(0.9506);">0.69</span>
<span class="t" style="top:677.84px;font-size:12px;color:#555;left:818.30px;transform-origin:0 0;transform:scaleX(0.9913);">AZ</span>
<span class="t" style="top:677.84px;font-size:12px;color:#555;left:887.28px;transform-origin:100% 0;transform:scaleX(0.9591);">760</span>
<span class="t" style="top:677.84px;font-size:12px;color:#555;left:918.00px;transform-origin:0 0;transform:scaleX(1.0525);">Manuf</span>
<span class="t" style="top:676.84px;font-size:12px;color:#3a92ba;left:1017.80px;transform-origin:0 0;transform:scaleX(0.9928);">NoteXchange Test S…</span>
<span class="t" style="top:671.04px;font-size:12px;color:#555;left:1149.00px;transform-origin:0 0;transform:scaleX(0.9524);">GNMA II - 15YR ▪  4.5</span>
<span class="t" style="top:685.04px;font-size:12px;color:#555;left:1149.00px;transform-origin:0 0;transform:scaleX(0.9558);">03.15.17 ▪  03.06.17 ▪  05:05:12 PM</span>
<span class="t" style="top:677.84px;font-size:12px;color:#555;left:1370.78px;transform-origin:100% 0;transform:scaleX(0.9644);">103.53125</span>
<span class="t" style="top:677.84px;font-size:12px;color:#555;left:1467.77px;transform-origin:100% 0;transform:scaleX(0.9558);">100.5</span>
<span class="t" style="top:677.84px;font-size:12px;color:#555;left:1537.77px;transform-origin:100% 0;transform:scaleX(0.9558);">100.5</span>
<span class="t" style="top:677.84px;font-size:12px;color:#555;left:1640.93px;transform-origin:100% 0;transform:scaleX(0.8991);">0</span>
<svg class="b" style="left:1660px;top:678px" width="12" height="12" viewBox="0 0 12 12"><circle cx="1.35" cy="10.05" r="1.15" fill="#4d4d4d"/><path d="M0.3 5.3 A5.8 5.8 0 0 1 6.1 11.1" fill="none" stroke="#4d4d4d" stroke-width="2"/><path d="M0.3 1.8 A9.3 9.3 0 0 1 9.6 11.1" fill="none" stroke="#4d4d4d" stroke-width="2"/></svg>
<span class="t" style="top:717.84px;font-size:12px;color:#555;left:516.50px;transform-origin:0 0;transform:scaleX(0.9840);">%</span>
<span class="t" style="top:717.84px;font-size:12px;color:#555;left:538.00px;transform-origin:0 0;transform:scaleX(0.9459);">Con 15 Y F</span>
<span class="t" style="top:717.84px;font-size:12px;color:#555;left:696.30px;transform-origin:100% 0;transform:scaleX(0.9657);">60.00%</span>
<span class="t" style="top:717.84px;font-size:12px;color:#555;left:783.95px;transform-origin:100% 0;transform:scaleX(0.9506);">0.62</span>
<span class="t" style="top:717.84px;font-size:12px;color:#555;left:818.30px;transform-origin:0 0;transform:scaleX(0.8722);">CO</span>
<span class="t" style="top:717.84px;font-size:12px;color:#555;left:887.28px;transform-origin:100% 0;transform:scaleX(0.9591);">600</span>
<span class="t" style="top:717.84px;font-size:12px;color:#555;left:918.00px;transform-origin:0 0;transform:scaleX(0.9803);">Single</span>
<span class="t" style="top:716.84px;font-size:12px;color:#3a92ba;left:1017.80px;transform-origin:0 0;transform:scaleX(0.9928);">NoteXchange Test S…</span>
<span class="t" style="top:711.04px;font-size:12px;color:#555;left:1149.00px;transform-origin:0 0;transform:scaleX(0.9361);">FNMA - 30YR ▪  4</span>
<span class="t" style="top:725.04px;font-size:12px;color:#555;left:1149.00px;transform-origin:0 0;transform:scaleX(0.9604);">03.12.17 ▪  03.06.17 ▪  05:05:11 PM</span>
<span class="t" style="top:717.84px;font-size:12px;color:#555;left:1384.13px;transform-origin:100% 0;transform:scaleX(0.9614);">104.625</span>
<span class="t" style="top:717.84px;font-size:12px;color:#555;left:1477.78px;transform-origin:100% 0;transform:scaleX(0.9591);">101</span>
<span class="t" style="top:717.84px;font-size:12px;color:#555;left:1547.78px;transform-origin:100% 0;transform:scaleX(0.9591);">101</span>
<span class="t" style="top:717.84px;font-size:12px;color:#555;left:1640.93px;transform-origin:100% 0;transform:scaleX(0.8991);">0</span>
<svg class="b" style="left:1660px;top:718px" width="12" height="12" viewBox="0 0 12 12"><circle cx="1.35" cy="10.05" r="1.15" fill="#4d4d4d"/><path d="M0.3 5.3 A5.8 5.8 0 0 1 6.1 11.1" fill="none" stroke="#4d4d4d" stroke-width="2"/><path d="M0.3 1.8 A9.3 9.3 0 0 1 9.6 11.1" fill="none" stroke="#4d4d4d" stroke-width="2"/></svg>
<span class="t" style="top:757.84px;font-size:12px;color:#555;left:516.50px;transform-origin:0 0;transform:scaleX(0.9840);">%</span>
<span class="t" style="top:757.84px;font-size:12px;color:#555;left:538.00px;transform-origin:0 0;transform:scaleX(0.9459);">Con 30 Y F</span>
<span class="t" style="top:757.84px;font-size:12px;color:#555;left:696.30px;transform-origin:100% 0;transform:scaleX(0.9657);">90.00%</span>
<span class="t" style="top:757.84px;font-size:12px;color:#555;left:783.95px;transform-origin:100% 0;transform:scaleX(0.9506);">0.92</span>
<span class="t" style="top:757.84px;font-size:12px;color:#555;left:818.30px;transform-origin:0 0;transform:scaleX(0.9195);">TX</span>
<span class="t" style="top:757.84px;font-size:12px;color:#555;left:887.28px;transform-origin:100% 0;transform:scaleX(0.9591);">604</span>
<span class="t" style="top:757.84px;font-size:12px;color:#555;left:918.00px;transform-origin:0 0;transform:scaleX(1.0153);">Condo</span>
<span class="t" style="top:756.84px;font-size:12px;color:#3a92ba;left:1017.80px;transform-origin:0 0;transform:scaleX(0.9928);">NoteXchange Test S…</span>
<span class="t" style="top:751.04px;font-size:12px;color:#555;left:1149.00px;transform-origin:0 0;transform:scaleX(0.9524);">GNMA II - 15YR ▪  4.5</span>
<span class="t" style="top:765.04px;font-size:12px;color:#555;left:1149.00px;transform-origin:0 0;transform:scaleX(0.9558);">03.15.17 ▪  03.06.17 ▪  05:05:12 PM</span>
<span class="t" style="top:757.84px;font-size:12px;color:#555;left:1370.78px;transform-origin:100% 0;transform:scaleX(0.9644);">103.53125</span>
<span class="t" style="top:757.84px;font-size:12px;color:#555;left:1467.77px;transform-origin:100% 0;transform:scaleX(0.9558);">103.1</span>
<span class="t" style="top:757.84px;font-size:12px;color:#555;left:1537.77px;transform-origin:100% 0;transform:scaleX(0.9558);">103.1</span>
<span class="t" style="top:757.84px;font-size:12px;color:#555;left:1640.93px;transform-origin:100% 0;transform:scaleX(0.8991);">0</span>
<svg class="b" style="left:1660px;top:758px" width="12" height="12" viewBox="0 0 12 12"><circle cx="1.35" cy="10.05" r="1.15" fill="#4d4d4d"/><path d="M0.3 5.3 A5.8 5.8 0 0 1 6.1 11.1" fill="none" stroke="#4d4d4d" stroke-width="2"/><path d="M0.3 1.8 A9.3 9.3 0 0 1 9.6 11.1" fill="none" stroke="#4d4d4d" stroke-width="2"/></svg>
<span class="t" style="top:797.84px;font-size:12px;color:#555;left:516.50px;transform-origin:0 0;transform:scaleX(0.9840);">%</span>
<span class="t" style="top:797.84px;font-size:12px;color:#555;left:538.00px;transform-origin:0 0;transform:scaleX(1.0530);">Other</span>
<span class="t" style="top:797.84px;font-size:12px;color:#555;left:696.30px;transform-origin:100% 0;transform:scaleX(0.9657);">50.00%</span>
<span class="t" style="top:797.84px;font-size:12px;color:#555;left:783.95px;transform-origin:100% 0;transform:scaleX(0.9506);">0.52</span>
<span class="t" style="top:797.84px;font-size:12px;color:#555;left:818.30px;transform-origin:0 0;transform:scaleX(1.0167);">MA</span>
<span class="t" style="top:797.84px;font-size:12px;color:#555;left:887.28px;transform-origin:100% 0;transform:scaleX(0.9591);">800</span>
<span class="t" style="top:797.84px;font-size:12px;color:#555;left:918.00px;transform-origin:0 0;transform:scaleX(1.0815);">Multi</span>
<span class="t" style="top:796.84px;font-size:12px;color:#3a92ba;left:1017.80px;transform-origin:0 0;transform:scaleX(0.9928);">NoteXchange Test S…</span>
<span class="t" style="top:791.04px;font-size:12px;color:#555;left:1149.00px;transform-origin:0 0;transform:scaleX(0.9524);">GNMA II - 15YR ▪  4.5</span>
<span class="t" style="top:805.04px;font-size:12px;color:#555;left:1149.00px;transform-origin:0 0;transform:scaleX(0.9558);">03.15.17 ▪  03.06.17 ▪  05:05:12 PM</span>
<span class="t" style="top:797.84px;font-size:12px;color:#555;left:1370.78px;transform-origin:100% 0;transform:scaleX(0.9644);">103.53125</span>
<span class="t" style="top:797.84px;font-size:12px;color:#555;left:1461.10px;transform-origin:100% 0;transform:scaleX(0.9591);">101.25</span>
<span class="t" style="top:797.84px;font-size:12px;color:#555;left:1531.10px;transform-origin:100% 0;transform:scaleX(0.9591);">101.25</span>
<span class="t" style="top:797.84px;font-size:12px;color:#555;left:1640.93px;transform-origin:100% 0;transform:scaleX(0.8991);">0</span>
<svg class="b" style="left:1660px;top:798px" width="12" height="12" viewBox="0 0 12 12"><circle cx="1.35" cy="10.05" r="1.15" fill="#4d4d4d"/><path d="M0.3 5.3 A5.8 5.8 0 0 1 6.1 11.1" fill="none" stroke="#4d4d4d" stroke-width="2"/><path d="M0.3 1.8 A9.3 9.3 0 0 1 9.6 11.1" fill="none" stroke="#4d4d4d" stroke-width="2"/></svg>
<span class="t" style="top:837.84px;font-size:12px;color:#555;left:516.50px;transform-origin:0 0;transform:scaleX(0.9840);">%</span>
<span class="t" style="top:837.84px;font-size:12px;color:#555;left:538.00px;transform-origin:0 0;transform:scaleX(0.9459);">Con 30 Y F</span>
<span class="t" style="top:837.84px;font-size:12px;color:#555;left:696.30px;transform-origin:100% 0;transform:scaleX(0.9657);">80.00%</span>
<span class="t" style="top:837.84px;font-size:12px;color:#555;left:783.95px;transform-origin:100% 0;transform:scaleX(0.9506);">0.82</span>
<span class="t" style="top:837.84px;font-size:12px;color:#555;left:818.30px;transform-origin:0 0;transform:scaleX(0.9058);">NC</span>
<span class="t" style="top:837.84px;font-size:12px;color:#555;left:887.28px;transform-origin:100% 0;transform:scaleX(0.9591);">660</span>
<span class="t" style="top:837.84px;font-size:12px;color:#555;left:918.00px;transform-origin:0 0;transform:scaleX(0.9803);">Single</span>
<span class="t" style="top:836.84px;font-size:12px;color:#3a92ba;left:1017.80px;transform-origin:0 0;transform:scaleX(0.9928);">NoteXchange Test S…</span>
<span class="t" style="top:831.04px;font-size:12px;color:#555;left:1149.00px;transform-origin:0 0;transform:scaleX(0.9524);">GNMA II - 15YR ▪  4.5</span>
<span class="t" style="top:845.04px;font-size:12px;color:#555;left:1149.00px;transform-origin:0 0;transform:scaleX(0.9558);">03.15.17 ▪  03.06.17 ▪  05:05:12 PM</span>
<span class="t" style="top:837.84px;font-size:12px;color:#555;left:1370.78px;transform-origin:100% 0;transform:scaleX(0.9644);">103.53125</span>
<span class="t" style="top:837.84px;font-size:12px;color:#555;left:1454.43px;transform-origin:100% 0;transform:scaleX(0.9614);">102.235</span>
<span class="t" style="top:837.84px;font-size:12px;color:#555;left:1524.43px;transform-origin:100% 0;transform:scaleX(0.9614);">102.235</span>
<span class="t" style="top:837.84px;font-size:12px;color:#555;left:1640.93px;transform-origin:100% 0;transform:scaleX(0.8991);">0</span>
<svg class="b" style="left:1660px;top:838px" width="12" height="12" viewBox="0 0 12 12"><circle cx="1.35" cy="10.05" r="1.15" fill="#4d4d4d"/><path d="M0.3 5.3 A5.8 5.8 0 0 1 6.1 11.1" fill="none" stroke="#4d4d4d" stroke-width="2"/><path d="M0.3 1.8 A9.3 9.3 0 0 1 9.6 11.1" fill="none" stroke="#4d4d4d" stroke-width="2"/></svg>
<span class="t" style="top:887.07px;font-size:11.5px;color:#555;left:1546.50px;transform-origin:0 0;transform:scaleX(0.9663);">records per page</span>
<div class="b " style="left:1644px;top:880px;width:60px;height:25px;background:#fff;border:1px solid #ddd;"></div>
<span class="t" style="top:888.69px;font-size:11px;color:#555;left:1655.00px;transform-origin:0 0;transform:scaleX(0.9000);">50</span>
<div class="b" style="left:1690.5px;top:889px;width:0;height:0;border-left:3.0px solid transparent;border-right:3.0px solid transparent;border-top:6px solid #555;"></div>
<div class="b " style="left:0px;top:89px;width:516px;height:861px;background:#efefef;border-right:1px solid #dedede;"></div>
<span class="t" style="top:101.06px;font-size:18px;color:#555;left:14.30px;transform-origin:0 0;transform:scaleX(0.8751);">Search Loans</span>
<div class="b " style="left:133.5px;top:101px;width:174px;height:16.5px;background:#f8f8f8;border:1px solid #dcdcdc;"></div>
<div class="b " style="left:324px;top:106.5px;width:7px;height:7px;background:#fafafa;border:1px solid #ddd;"></div>
<span class="t" style="top:104.32px;font-size:12.5px;color:#666;left:339.00px;transform-origin:0 0;transform:scaleX(1.0077);">All</span>
<div class="b " style="left:370px;top:106px;width:8px;height:8px;background:#73d083;"></div>
<span class="t" style="top:104.32px;font-size:12.5px;color:#666;left:386.00px;transform-origin:0 0;transform:scaleX(0.9717);">Filtered</span>
<svg class="b" style="left:478px;top:102px" width="23" height="16" viewBox="0 0 23 16"><path d="M0.3 7.8 L7.6 1 V14.6 Z" fill="#555"/><rect x="6" y="6.4" width="16" height="2.9" fill="#555"/></svg>
<div class="b " style="left:15px;top:135px;width:485px;height:27px;background:#efefef;border:1px solid #cfcfcf;"></div>
<div class="b " style="left:15px;top:135px;width:113px;height:27px;background:#6cbb45;"></div>
<div class="b " style="left:274px;top:135px;width:1px;height:27px;background:#cfcfcf;"></div>
<div class="b " style="left:388px;top:135px;width:1px;height:27px;background:#cfcfcf;"></div>
<span class="t" style="top:142.62px;font-size:12.5px;color:#fff;-webkit-text-stroke:0.7px currentColor;left:46.40px;transform-origin:0 0;transform:scaleX(0.9292);">Basic Info</span>
<span class="t" style="top:142.62px;font-size:12.5px;color:#555;left:168.50px;transform-origin:0 0;transform:scaleX(0.9499);">Loan Details</span>
<span class="t" style="top:142.62px;font-size:12.5px;color:#555;left:306.00px;transform-origin:0 0;transform:scaleX(0.9659);">Collateral</span>
<span class="t" style="top:142.62px;font-size:12.5px;color:#555;left:419.00px;transform-origin:0 0;transform:scaleX(0.9861);">Borrower</span>
<span class="t" style="top:176.02px;font-size:12.5px;color:#555;left:15.20px;transform-origin:0 0;transform:scaleX(0.9956);">Loan Amnt</span>
<div class="b" style="left:80.5px;top:180.0px;width:0;height:0;border-left:4.25px solid transparent;border-right:4.25px solid transparent;border-top:5.2px solid #888;"></div>
<span class="t" style="top:348.02px;font-size:12.5px;color:#555;left:15.20px;transform-origin:0 0;transform:scaleX(0.8983);">Rate (%)</span>
<div class="b" style="left:65.2px;top:352.0px;width:0;height:0;border-left:4.25px solid transparent;border-right:4.25px solid transparent;border-top:5.2px solid #888;"></div>
<span class="t" style="top:520.12px;font-size:12.5px;color:#555;left:15.20px;transform-origin:0 0;transform:scaleX(0.9556);">Program</span>
<div class="b" style="left:67.4px;top:524.1px;width:0;height:0;border-left:4.25px solid transparent;border-right:4.25px solid transparent;border-top:5.2px solid #888;"></div>
<span class="t" style="top:707.22px;font-size:12.5px;color:#555;left:15.20px;transform-origin:0 0;transform:scaleX(0.8751);">LTV (%)</span>
<div class="b" style="left:61.6px;top:711.1999999999999px;width:0;height:0;border-left:4.25px solid transparent;border-right:4.25px solid transparent;border-top:5.2px solid #888;"></div>
<span class="t" style="top:878.92px;font-size:12.5px;color:#555;left:15.20px;transform-origin:0 0;transform:scaleX(0.9251);">State</span>
<div class="b" style="left:48.8px;top:882.9px;width:0;height:0;border-left:4.25px solid transparent;border-right:4.25px solid transparent;border-top:5.2px solid #888;"></div>
<div class="b " style="left:97px;top:515.7px;width:22.2px;height:16.3px;border:1px solid #555;"></div>
<svg class="b" style="left:100.3px;top:518.4px" width="16" height="11" viewBox="0 0 16 11"><rect x="0.9" y="1" width="7.9" height="1.7" fill="#4a4a4a"/><rect x="0.9" y="4" width="5.8" height="1.7" fill="#4a4a4a"/><rect x="0.9" y="7.1" width="4" height="1.7" fill="#4a4a4a"/><path d="M12.4 0.7 V7" fill="none" stroke="#4a4a4a" stroke-width="1.1"/><path d="M10.1 6.3 H14.7 L12.4 9.4 Z" fill="#4a4a4a"/></svg>
<div class="b " style="left:15px;top:195px;width:485px;height:134.5px;background:#f7f7f7;"></div>
<div class="b " style="left:30px;top:205px;width:465px;height:114.5px;border:1px solid #dcdcdc;"></div>
<div class="b " style="left:46px;top:252px;width:159px;height:20px;background:#fff;border:1px solid #9a9a9a;"></div>
<span class="t" style="top:257.22px;font-size:12.5px;color:#555;left:56.90px;transform-origin:0 0;transform:scaleX(0.9806);">Between</span>
<div class="b" style="left:191.8px;top:259.3px;width:0;height:0;border-left:3.2px solid transparent;border-right:3.2px solid transparent;border-top:5.6px solid #444;"></div>
<div class="b " style="left:46px;top:278.3px;width:74.5px;height:19.5px;background:#fff;border:1px solid #9a9a9a;"></div>
<div class="b " style="left:135.8px;top:278.3px;width:69.2px;height:19.5px;background:#fff;border:1px solid #9a9a9a;overflow:hidden;"></div>
<span class="t" style="top:283.32px;font-size:12.5px;color:#555;left:53.40px;transform-origin:0 0;transform:scaleX(0.9304);">125,000.00</span>
<span class="t" style="top:282.62px;font-size:12.5px;color:#555;left:126.30px;transform-origin:0 0;transform:scaleX(1.1533);">-</span>
<div class="b" style="left:137.5px;top:279.3px;width:60.3px;height:17.5px;overflow:hidden;">
<span class="t" style="top:4.02px;font-size:12.5px;color:#555;left:5.40px;transform-origin:0 0;transform:scaleX(0.9304);">450,000.00</span>
</div>
<div class="b " style="left:233px;top:226.3px;width:241px;height:72.2px;background:#fff;"></div>
<svg class="b" style="left:233px;top:226.3px" width="241" height="73" viewBox="0 0 241 73"><polygon points="0.0,43.7 17.2,43.7 34.4,14.4 51.6,43.7 241.0,43.7 241.0,72.2 0.0,72.2" fill="#819dbf"/><rect x="0.5" y="0.5" width="240" height="72" fill="none" stroke="#6fd184" stroke-width="1" stroke-dasharray="3.5,3"/></svg>
<div class="b " style="left:219px;top:212.2px;width:29.30000000000001px;height:13.6px;background:#8b8b8b;border-radius:3.5px;"></div>
<span class="t" style="top:213.27px;font-size:10.2px;color:#fff;font-weight:bold;-webkit-text-stroke:0;left:221.26px;transform-origin:50% 0;transform:scaleX(0.8654);">125K</span>
<div class="b " style="left:459.4px;top:212.2px;width:28.600000000000023px;height:13.6px;background:#8b8b8b;border-radius:3.5px;"></div>
<span class="t" style="top:213.27px;font-size:10.2px;color:#fff;font-weight:bold;-webkit-text-stroke:0;left:461.31px;transform-origin:50% 0;transform:scaleX(0.8367);">450K</span>
<svg class="b" style="left:225.5px;top:298.3px" width="12" height="11" viewBox="0 0 12 11"><path d="M6 0.2 L11.4 4.8 V10.4 H0.6 V4.8 Z" fill="#555"/><rect x="0.6" y="4.6" width="10.8" height="0.9" fill="#efefef" opacity=".55"/></svg>
<svg class="b" style="left:465.5px;top:298.3px" width="12" height="11" viewBox="0 0 12 11"><path d="M6 0.2 L11.4 4.8 V10.4 H0.6 V4.8 Z" fill="#555"/><rect x="0.6" y="4.6" width="10.8" height="0.9" fill="#efefef" opacity=".55"/></svg>
<div class="b " style="left:15px;top:367px;width:485px;height:134.5px;background:#f7f7f7;"></div>
<div class="b " style="left:30px;top:377px;width:465px;height:114.5px;border:1px solid #dcdcdc;"></div>
<div class="b " style="left:46px;top:424px;width:159px;height:20px;background:#fff;border:1px solid #9a9a9a;"></div>
<span class="t" style="top:429.22px;font-size:12.5px;color:#555;left:56.90px;transform-origin:0 0;transform:scaleX(0.9806);">Between</span>
<div class="b" style="left:191.8px;top:431.3px;width:0;height:0;border-left:3.2px solid transparent;border-right:3.2px solid transparent;border-top:5.6px solid #444;"></div>
<div class="b " style="left:46px;top:450.3px;width:74.5px;height:19.5px;background:#fff;border:1px solid #9a9a9a;"></div>
<div class="b " style="left:135.8px;top:450.3px;width:69.2px;height:19.5px;background:#fff;border:1px solid #9a9a9a;overflow:hidden;"></div>
<span class="t" style="top:455.32px;font-size:12.5px;color:#555;left:53.40px;transform-origin:0 0;transform:scaleX(0.9660);">2.50</span>
<span class="t" style="top:454.62px;font-size:12.5px;color:#555;left:126.30px;transform-origin:0 0;transform:scaleX(1.1533);">-</span>
<div class="b" style="left:137.5px;top:451.3px;width:60.3px;height:17.5px;overflow:hidden;">
<span class="t" style="top:4.02px;font-size:12.5px;color:#555;left:5.40px;transform-origin:0 0;transform:scaleX(0.9660);">5.38</span>
</div>
<div class="b " style="left:233px;top:398.3px;width:241px;height:72.2px;background:#fff;"></div>
<svg class="b" style="left:233px;top:398.3px" width="241" height="73" viewBox="0 0 241 73"><polygon points="0.0,12.0 241.0,12.0 241.0,72.2 0.0,72.2" fill="#819dbf"/><rect x="0.5" y="0.5" width="240" height="72" fill="none" stroke="#6fd184" stroke-width="1" stroke-dasharray="3.5,3"/></svg>
<div class="b " style="left:219px;top:384.2px;width:24.400000000000006px;height:13.6px;background:#8b8b8b;border-radius:3.5px;"></div>
<span class="t" style="top:385.27px;font-size:10.2px;color:#fff;font-weight:bold;-webkit-text-stroke:0;left:221.07px;transform-origin:50% 0;transform:scaleX(0.8161);">2.50</span>
<div class="b " style="left:463.2px;top:384.2px;width:24.80000000000001px;height:13.6px;background:#8b8b8b;border-radius:3.5px;"></div>
<span class="t" style="top:385.27px;font-size:10.2px;color:#fff;font-weight:bold;-webkit-text-stroke:0;left:465.47px;transform-origin:50% 0;transform:scaleX(0.8363);">5.38</span>
<svg class="b" style="left:225.5px;top:470.3px" width="12" height="11" viewBox="0 0 12 11"><path d="M6 0.2 L11.4 4.8 V10.4 H0.6 V4.8 Z" fill="#555"/><rect x="0.6" y="4.6" width="10.8" height="0.9" fill="#efefef" opacity=".55"/></svg>
<svg class="b" style="left:465.5px;top:470.3px" width="12" height="11" viewBox="0 0 12 11"><path d="M6 0.2 L11.4 4.8 V10.4 H0.6 V4.8 Z" fill="#555"/><rect x="0.6" y="4.6" width="10.8" height="0.9" fill="#efefef" opacity=".55"/></svg>
<div class="b " style="left:15px;top:726px;width:485px;height:134.5px;background:#f7f7f7;"></div>
<div class="b " style="left:30px;top:736px;width:465px;height:114.5px;border:1px solid #dcdcdc;"></div>
<div class="b " style="left:46px;top:783px;width:159px;height:20px;background:#fff;border:1px solid #9a9a9a;"></div>
<span class="t" style="top:788.22px;font-size:12.5px;color:#555;left:56.90px;transform-origin:0 0;transform:scaleX(0.9806);">Between</span>
<div class="b" style="left:191.8px;top:790.3px;width:0;height:0;border-left:3.2px solid transparent;border-right:3.2px solid transparent;border-top:5.6px solid #444;"></div>
<div class="b " style="left:46px;top:809.3px;width:74.5px;height:19.5px;background:#fff;border:1px solid #9a9a9a;"></div>
<div class="b " style="left:135.8px;top:809.3px;width:69.2px;height:19.5px;background:#fff;border:1px solid #9a9a9a;overflow:hidden;"></div>
<span class="t" style="top:814.32px;font-size:12.5px;color:#555;left:53.40px;transform-origin:0 0;transform:scaleX(0.9592);">40.00</span>
<span class="t" style="top:813.62px;font-size:12.5px;color:#555;left:126.30px;transform-origin:0 0;transform:scaleX(1.1533);">-</span>
<div class="b" style="left:137.5px;top:810.3px;width:60.3px;height:17.5px;overflow:hidden;">
<span class="t" style="top:4.02px;font-size:12.5px;color:#555;left:5.40px;transform-origin:0 0;transform:scaleX(0.9592);">90.00</span>
</div>
<div class="b " style="left:233px;top:757.3px;width:241px;height:72.2px;background:#fff;"></div>
<svg class="b" style="left:233px;top:757.3px" width="241" height="73" viewBox="0 0 241 73"><polygon points="0.0,52.5 24.1,31.3 48.1,31.3 72.2,52.5 96.3,52.5 120.3,31.3 144.4,52.5 168.5,52.5 192.6,52.5 216.6,11.0 240.7,52.5 241.0,72.2 0.0,72.2" fill="#819dbf"/><rect x="0.5" y="0.5" width="240" height="72" fill="none" stroke="#6fd184" stroke-width="1" stroke-dasharray="3.5,3"/></svg>
<div class="b " style="left:219.3px;top:743.2px;width:30.69999999999999px;height:13.6px;background:#8b8b8b;border-radius:3.5px;"></div>
<span class="t" style="top:744.97px;font-size:10.2px;color:#fff;font-weight:bold;-webkit-text-stroke:0;left:221.69px;transform-origin:50% 0;transform:scaleX(0.8816);">40.00</span>
<div class="b " style="left:457px;top:743.2px;width:31.399999999999977px;height:13.6px;background:#8b8b8b;border-radius:3.5px;"></div>
<span class="t" style="top:744.97px;font-size:10.2px;color:#fff;font-weight:bold;-webkit-text-stroke:0;left:459.74px;transform-origin:50% 0;transform:scaleX(0.9090);">90.00</span>
<svg class="b" style="left:225.5px;top:829.3px" width="12" height="11" viewBox="0 0 12 11"><path d="M6 0.2 L11.4 4.8 V10.4 H0.6 V4.8 Z" fill="#555"/><rect x="0.6" y="4.6" width="10.8" height="0.9" fill="#efefef" opacity=".55"/></svg>
<svg class="b" style="left:465.5px;top:829.3px" width="12" height="11" viewBox="0 0 12 11"><path d="M6 0.2 L11.4 4.8 V10.4 H0.6 V4.8 Z" fill="#555"/><rect x="0.6" y="4.6" width="10.8" height="0.9" fill="#efefef" opacity=".55"/></svg>
<div class="b " style="left:15px;top:539px;width:485px;height:149.5px;background:#f7f7f7;"></div>
<div class="b " style="left:30px;top:555px;width:13px;height:13px;background:#fdfdfd;border:1px solid #555;"></div>
<span class="t" style="top:554.52px;font-size:12.5px;color:#555;left:46.20px;transform-origin:0 0;transform:scaleX(0.9254);">ARM 5/1</span>
<div class="b " style="left:213px;top:557px;width:18px;height:10px;background:#819dbf;"></div>
<span class="t" style="top:556.62px;font-size:12.5px;color:#555;left:234.20px;transform-origin:0 0;transform:scaleX(0.8919);">1</span>
<div class="b " style="left:30px;top:581px;width:13px;height:13px;background:#fdfdfd;border:1px solid #555;"></div>
<span class="t" style="top:580.52px;font-size:12.5px;color:#555;left:46.20px;transform-origin:0 0;transform:scaleX(0.8969);">Con 15 Y F</span>
<div class="b " style="left:213px;top:583px;width:7px;height:10px;background:#819dbf;"></div>
<span class="t" style="top:582.62px;font-size:12.5px;color:#555;left:223.20px;transform-origin:0 0;transform:scaleX(0.8919);">2</span>
<div class="b " style="left:30px;top:607px;width:13px;height:13px;background:#fdfdfd;border:1px solid #555;"></div>
<span class="t" style="top:606.52px;font-size:12.5px;color:#555;left:46.20px;transform-origin:0 0;transform:scaleX(0.8969);">Con 30 Y F</span>
<div class="b " style="left:213px;top:609px;width:93px;height:10px;background:#819dbf;"></div>
<span class="t" style="top:608.62px;font-size:12.5px;color:#555;left:309.20px;transform-origin:0 0;transform:scaleX(0.8919);">7</span>
<div class="b " style="left:30px;top:633px;width:13px;height:13px;background:#fdfdfd;border:1px solid #555;"></div>
<span class="t" style="top:632.52px;font-size:12.5px;color:#555;left:46.20px;transform-origin:0 0;transform:scaleX(0.9981);">Other</span>
<div class="b " style="left:213px;top:635px;width:42px;height:10px;background:#819dbf;"></div>
<span class="t" style="top:634.62px;font-size:12.5px;color:#555;left:258.20px;transform-origin:0 0;transform:scaleX(0.8919);">4</span>
<div class="b " style="left:30px;top:659px;width:13px;height:13px;background:#fdfdfd;border:1px solid #555;"></div>
<span class="t" style="top:658.52px;font-size:12.5px;color:#555;left:46.20px;transform-origin:0 0;transform:scaleX(0.8871);">VA 30 Y F</span>
<div class="b " style="left:213px;top:661px;width:7px;height:10px;background:#819dbf;"></div>
<span class="t" style="top:660.62px;font-size:12.5px;color:#555;left:223.20px;transform-origin:0 0;transform:scaleX(0.8919);">2</span>
<div class="b " style="left:15px;top:898px;width:485px;height:3px;background:#f8f8f8;"></div>
<span class="t" style="top:917.40px;font-size:15px;color:#78bd57;left:378.50px;transform-origin:0 0;transform:scaleX(0.8370);">Clear</span>
<div class="b " style="left:430px;top:911px;width:65px;height:30px;background:#6cbb45;border-radius:6px;"></div>
<span class="t" style="top:917.73px;font-size:14.5px;color:#fff;-webkit-text-stroke:0.7px currentColor;left:443.50px;transform-origin:0 0;transform:scaleX(0.8424);">Search</span>
</body></html>
